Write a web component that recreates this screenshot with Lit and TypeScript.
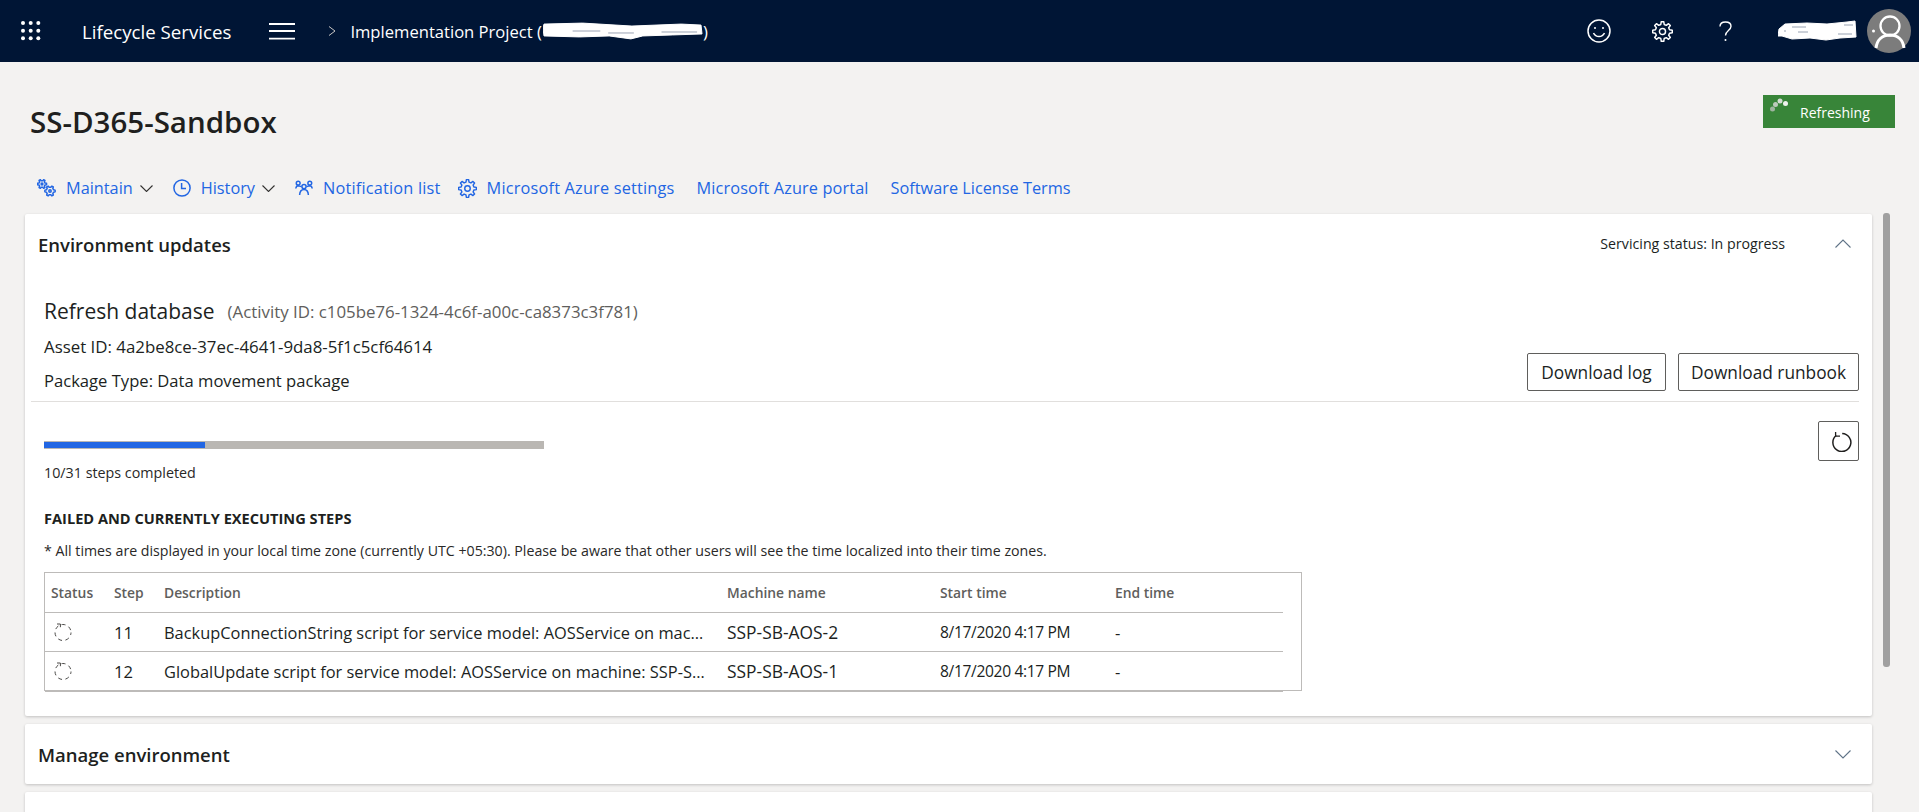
import { LitElement, html, css, svg } from 'lit';
import { customElement } from 'lit/decorators.js';

// gear outline, used in the top bar and in the command bar
const gearPath = (cx: number, cy: number, outer: number, inner: number, teeth = 8) => {
  const pts: string[] = [];
  const step = (Math.PI * 2) / teeth;
  for (let i = 0; i < teeth; i++) {
    const a = i * step;
    [[-0.3, inner], [-0.16, outer], [0.16, outer], [0.3, inner]].forEach(([k, r]) => {
      const t = a + k * step;
      pts.push(`${(cx + Math.cos(t) * r).toFixed(2)},${(cy + Math.sin(t) * r).toFixed(2)}`);
    });
  }
  return `M${pts.join('L')}Z`;
};

const chevron = (up = false) => html`
  <svg class="chev" width="16" height="9" viewBox="0 0 16 9" fill="none" stroke="currentColor" stroke-width="1.1">
    <path d=${up ? 'M.5 8.5 8 1l7.5 7.5' : 'M.5.5 8 8 15.5.5'} />
  </svg>`;

const navChevron = html`
  <svg width="13" height="7" viewBox="0 0 13 7" fill="none" stroke="#323130" stroke-width="1.1"><path d="M.5.5l6 6 6-6" /></svg>`;

const gearIcon = (size: number, sw: number) => html`
  <svg width=${size} height=${size} viewBox="0 0 20 20" fill="none" stroke="currentColor" stroke-width=${sw} stroke-linejoin="round">
    <path d=${gearPath(10, 10, 9.4, 6.9)} />
    <circle cx="10" cy="10" r="2.9" />
  </svg>`;

const maintainIcon = html`
  <svg width="19" height="18" viewBox="0 0 19 18" fill="none" stroke="currentColor" stroke-width="1.5" stroke-linejoin="round">
    <path d=${gearPath(5, 5, 4.6, 3.2, 6)} />
    <circle cx="5" cy="5" r=".9" />
    <path d=${gearPath(13, 12, 5.2, 3.8, 6)} />
    <circle cx="13" cy="12" r="1.2" />
  </svg>`;

const clockIcon = html`
  <svg width="18" height="18" viewBox="0 0 18 18" fill="none" stroke="currentColor" stroke-width="1.5">
    <circle cx="9" cy="9" r="8.1" />
    <path d="M8.6 4v5.6h4.4" />
  </svg>`;

const peopleIcon = html`
  <svg width="18" height="16" viewBox="0 0 18 16" fill="none" stroke="currentColor" stroke-width="1.5">
    <circle cx="3.2" cy="3.2" r="1.9" />
    <circle cx="14.8" cy="3.2" r="1.9" />
    <circle cx="9" cy="6.6" r="2.1" />
    <path d="M.8 8.5c.3-2 1-2.9 2.6-2.8l3 .9M17.2 8.5c-.3-2-1-2.9-2.6-2.8l-3 .9M4.6 15c.2-3.6 1.7-5.6 4.4-5.6s4.2 2 4.4 5.6" />
  </svg>`;

const spinner = html`
  <svg class="spin" width="20" height="20" viewBox="0 0 20 20" fill="none" stroke="#4a4947" stroke-width="1">
    <circle cx="10" cy="10.5" r="8" stroke-dasharray="4 3.5" stroke-dashoffset="1.5" />
    <path d="M4 2h3.4v3.2" />
  </svg>`;

const navItems = [
  { icon: maintainIcon, text: 'Maintain', menu: true },
  { icon: clockIcon, text: 'History', menu: true },
  { icon: peopleIcon, text: 'Notification list', menu: false },
  { icon: gearIcon(19, 1.5), text: 'Microsoft Azure settings', menu: false },
  { icon: null, text: 'Microsoft Azure portal', menu: false },
  { icon: null, text: 'Software License Terms', menu: false },
];

const steps = [
  { step: '11', description: 'BackupConnectionString script for service model: AOSService on machine: SSP-SB-AOS-2', machine: 'SSP-SB-AOS-2', start: '8/17/2020 4:17 PM', end: '-' },
  { step: '12', description: 'GlobalUpdate script for service model: AOSService on machine: SSP-SB-AOS-1', machine: 'SSP-SB-AOS-1', start: '8/17/2020 4:17 PM', end: '-' },
];

@customElement('app-root')
export class AppRoot extends LitElement {
  static styles = css`
    :host {
      display: block;
      height: 812px;
      overflow: hidden;
      background: #f3f2f1;
      color: #201f1e;
      font-family: 'Open Sans', 'Noto Sans', sans-serif;
    }
    svg { display: block; flex: none; }

    /* top bar */
    .topbar {
      height: 62px;
      display: flex;
      align-items: center;
      padding: 0 8px 0 21px;
      background: #001535;
      color: #fff;
    }
    .product { margin-left: 41px; font-size: 18.7px; }
    .burger { margin-left: 38px; }
    .crumb-sep { margin-left: 33px; }
    .crumb { margin-left: 14px; font-size: 16.6px; }
    .crumb.close { margin-left: 0; }
    .redacted { margin-left: 1px; }
    .actions { margin-left: auto; display: flex; align-items: center; }
    .actions .gear { margin-left: 41px; }
    .actions .help { margin-left: 46px; }
    .actions .user { margin-left: 46px; }
    .actions .avatar { margin-left: 10px; }

    /* title + status */
    .title-row {
      display: flex;
      justify-content: space-between;
      align-items: flex-start;
      padding: 33px 24px 0 30px;
    }
    h1 {
      margin: 9px 0 1px;
      font-size: 29.5px;
      line-height: 36px;
      font-weight: 600;
    }
    .status-pill {
      width: 132px;
      height: 33px;
      box-sizing: border-box;
      display: flex;
      padding: 3px 0 0 7px;
      background: #388539;
      color: #fff;
      font-size: 14px;
      line-height: 30px;
    }
    .status-pill svg { margin-right: 12px; }

    /* command bar */
    .commands {
      display: flex;
      align-items: center;
      height: 24px;
      margin-top: 35px;
      padding-left: 37px;
      color: #2266e3;
      font-size: 16.3px;
    }
    .cmd { display: flex; align-items: center; margin-right: 20px; white-space: nowrap; }
    .cmd svg + span { margin-left: 10px; }
    .cmd span + svg { margin-left: 7px; }
    .cmd:nth-child(3) { margin-right: 17px; }
    .cmd:nth-child(3) span { letter-spacing: 0.2px; }
    .cmd:nth-child(4) { margin-right: 22px; }
    .cmd:nth-child(4) span { letter-spacing: 0.2px; }
    .cmd:nth-child(5) { margin-right: 22px; }
    .cmd:nth-child(5) span { letter-spacing: 0.12px; }

    /* cards */
    .content { display: flex; margin-top: 14px; padding: 0 29px 0 25px; }
    .cards { flex: 1; display: flex; flex-direction: column; gap: 8px; }
    .thumb {
      flex: none;
      width: 7px;
      height: 454px;
      margin: -1px 0 0 11px;
      border-radius: 3px;
      background: #a0a0a0;
    }
    .card {
      background: #fff;
      border-radius: 2px;
      box-shadow: 0 1px 3px rgba(0, 0, 0, 0.2);
    }
    .card.stub { height: 60px; }
    .card-head {
      height: 64px;
      display: flex;
      align-items: center;
      justify-content: space-between;
      padding: 0 21px 3px 13px;
      box-sizing: border-box;
    }
    .card-head.small { height: 60px; padding-bottom: 0; }
    .card-head h2 { margin: 0; font-size: 18.5px; font-weight: 600; }
    .chev { color: #5f7387; }
    .card-tools { display: flex; align-items: center; margin-top: -2px; }
    .servicing { font-size: 14.2px; margin-right: 50px; }

    .card-body { margin: 0 13px 0 6px; padding-bottom: 25px; }
    .summary {
      display: flex;
      justify-content: space-between;
      align-items: flex-end;
      padding: 18px 0 8px 13px;
      border-bottom: 1px solid #e1dfdd;
    }
    .activity { display: flex; align-items: center; height: 30px; }
    .activity b { font-size: 21px; font-weight: 400; }
    .activity span { margin-left: 13px; font-size: 16.85px; color: #605e5c; }
    .meta { margin-top: 9px; font-size: 16.85px; line-height: 24px; }
    .meta + .meta { margin-top: 10px; font-size: 16.6px; }
    .buttons { display: flex; gap: 12px; margin-bottom: 2px; }
    .btn {
      width: 139px;
      height: 38px;
      box-sizing: border-box;
      padding: 0;
      border: 1px solid #5f5e5c;
      border-radius: 2px;
      background: #fff;
      color: #201f1e;
      font: inherit;
      font-size: 17.3px;
    }
    .btn.wide { width: 181px; }

    .progress-area { display: flex; justify-content: space-between; align-items: flex-start; padding-left: 13px; }
    .progress-main { padding-top: 39px; }
    .bar { width: 500px; height: 8px; background: #bab7b3; }
    .bar-fill { height: 6px; position: relative; top: 1px; background: #2266e3; }
    .steps-done { margin-top: 14px; font-size: 14.3px; line-height: 20px; color: #292827; }
    h3 { margin: 25px 0 0; font-size: 14.6px; line-height: 20px; font-weight: 700; }
    .note { margin-top: 13px; font-size: 14.2px; line-height: 20px; color: #292827; white-space: nowrap; }
    .reload {
      width: 41px;
      height: 40px;
      margin-top: 19px;
      box-sizing: border-box;
      display: flex;
      align-items: center;
      justify-content: flex-end;
      padding: 0 6px 0 0;
      border: 1px solid #5f5e5c;
      border-radius: 2px;
      background: #fff;
    }

    .table-box { width: 1258px; height: 119px; margin-top: 11px; box-sizing: border-box; border: 1px solid #bdbbb9; }
    table { width: 1238px; table-layout: fixed; border-collapse: collapse; }
    th, td { padding: 0 0 0 6px; text-align: left; white-space: nowrap; overflow: hidden; text-overflow: ellipsis; }
    th { height: 39px; font-size: 13.85px; font-weight: 600; color: #605e5c; border-bottom: 1px solid #bdbbb9; }
    td { height: 38px; font-size: 16.6px; border-bottom: 1px solid #bdbbb9; }
    tr:last-child td { border-bottom-width: 2px; }
    td.description { padding-right: 8px; font-size: 16.4px; }
    td.machine { font-size: 17.4px; }
    td.when { font-size: 15.6px; letter-spacing: -0.35px; }
    .spin { margin-left: 2px; }
  `;

  render() {
    return html`
      <header class="topbar">
        <svg width="20" height="20" viewBox="0 0 20 20" fill="#fff">
          ${[2, 9.7, 17.3].map((y) => [2, 9.7, 17.3].map((x) => svg`<circle cx=${x} cy=${y} r="2" />`))}
        </svg>
        <span class="product">Lifecycle Services</span>
        <svg class="burger" width="26" height="17" viewBox="0 0 26 17" stroke="#fff" stroke-width="1.8">
          <path d="M0 1h26M0 8h26M0 15.6h26" />
        </svg>
        <svg class="crumb-sep" width="8" height="10" viewBox="0 0 8 10" fill="none" stroke="#c8c6c4"><path d="M1 .5 7 5 1 9.5" /></svg>
        <span class="crumb">Implementation Project (</span>
        <svg class="redacted" width="160" height="18" viewBox="0 0 162 18">
          <path d="M1 2 40 1l50 3 50-2 20 1 1 9-30 1-30 1-12 3-22-3-30 1-36-1-1-8z" fill="#fff" stroke="#fff" stroke-linejoin="round" />
          <path d="M30 9h28M66 11h26M120 10h36" fill="none" stroke="#7f8aa0" stroke-width=".8" />
        </svg>
        <span class="crumb close">)</span>

        <div class="actions">
          <svg width="24" height="24" viewBox="0 0 24 24" fill="none" stroke="#fff" stroke-width="1.5">
            <circle cx="12" cy="12" r="11" />
            <path d="M6.5 14c1.2 2.4 3 3.5 5.5 3.5s4.3-1.1 5.5-3.5" />
            <circle cx="8" cy="9" r="1" fill="#fff" stroke="none" />
            <circle cx="16" cy="9" r="1" fill="#fff" stroke="none" />
          </svg>
          <span class="gear">${gearIcon(21, 1.4)}</span>
          <svg class="help" width="13" height="21" viewBox="0 0 13 21" fill="none" stroke="#fff" stroke-width="1.4">
            <path d="M1 5.5C1 2.6 3.2 1 6.5 1S12 2.8 12 5.3c0 4.2-5.5 4.2-5.5 9.2" />
            <circle cx="6.5" cy="19" r="1" fill="#fff" stroke="none" />
          </svg>
          <svg class="user" width="79" height="22" viewBox="0 0 79 22">
            <path d="M1 9 7 4l22-1 20 1 20-2 8-1 1 16-16 1-14 2-16-2-18 1-10-3-4 0z" fill="#fff" stroke="#fff" stroke-linejoin="round" />
            <path d="M14 7h14M6 11h2M20 12h10M60 14h14M66 5h9" fill="none" stroke="#7f8aa0" stroke-width=".8" />
          </svg>
          <svg class="avatar" width="44" height="44" viewBox="0 0 44 44" fill="none">
            <circle cx="22" cy="22" r="22" fill="#7c7c7c" />
            <circle cx="23" cy="17" r="9.5" stroke="#fff" stroke-width="2.3" />
            <path d="M9 39c1-8 6-13 14-13s13 5 14 13" stroke="#fff" stroke-width="3" />
            <circle cx="6.5" cy="22" r="1.5" fill="#fff" />
          </svg>
        </div>
      </header>

      <div class="title-row">
        <h1>SS-D365-Sandbox</h1>
        <div class="status-pill">
          <svg width="18" height="14" viewBox="0 0 18 14">
            <circle cx="2.5" cy="11" r="2.5" fill="#9fb4a0" />
            <circle cx="5.5" cy="6.5" r="2.5" fill="#bccabc" />
            <circle cx="10" cy="3" r="2.5" fill="#d4dcd4" />
            <circle cx="15.5" cy="5.5" r="2.5" fill="#eef2ee" />
          </svg>
          <span>Refreshing</span>
        </div>
      </div>

      <nav class="commands">
        ${navItems.map((item) => html`
          <div class="cmd">
            ${item.icon}
            <span>${item.text}</span>
            ${item.menu ? navChevron : ''}
          </div>`)}
      </nav>

      <div class="content">
        <div class="cards">
          <section class="card">
            <div class="card-head">
              <h2>Environment updates</h2>
              <div class="card-tools">
                <span class="servicing">Servicing status: In progress</span>
                ${chevron(true)}
              </div>
            </div>
            <div class="card-body">
              <div class="summary">
                <div>
                  <div class="activity">
                    <b>Refresh database</b>
                    <span>(Activity ID: c105be76-1324-4c6f-a00c-ca8373c3f781)</span>
                  </div>
                  <div class="meta">Asset ID: 4a2be8ce-37ec-4641-9da8-5f1c5cf64614</div>
                  <div class="meta">Package Type: Data movement package</div>
                </div>
                <div class="buttons">
                  <button class="btn">Download log</button>
                  <button class="btn wide">Download runbook</button>
                </div>
              </div>

              <div class="progress-area">
                <div class="progress-main">
                  <div class="bar"><div class="bar-fill" style="width:${(10 / 31) * 100}%"></div></div>
                  <div class="steps-done">10/31 steps completed</div>
                  <h3>FAILED AND CURRENTLY EXECUTING STEPS</h3>
                  <div class="note">* All times are displayed in your local time zone (currently UTC +05:30). Please be aware that other users will see the time localized into their time zones.</div>
                  <div class="table-box">
                    <table>
                      <colgroup>
                        <col style="width:63px" /><col style="width:50px" /><col style="width:563px" />
                        <col style="width:213px" /><col style="width:175px" /><col style="width:174px" />
                      </colgroup>
                      <thead>
                        <tr><th>Status</th><th>Step</th><th>Description</th><th>Machine name</th><th>Start time</th><th>End time</th></tr>
                      </thead>
                      <tbody>
                        ${steps.map((row) => html`
                          <tr>
                            <td>${spinner}</td>
                            <td>${row.step}</td>
                            <td class="description">${row.description}</td>
                            <td class="machine">${row.machine}</td>
                            <td class="when">${row.start}</td>
                            <td>${row.end}</td>
                          </tr>`)}
                      </tbody>
                    </table>
                  </div>
                </div>
                <button class="reload" aria-label="Refresh">
                  <svg width="20" height="21" viewBox="0 0 20 21" fill="none" stroke="#201f1e" stroke-width="1.5">
                    <path d="M4.2 4.5a9 9 0 1 0 6-2" />
                    <path d="M3.6 1v4.2h4.4" stroke-width="1.3" />
                  </svg>
                </button>
              </div>
            </div>
          </section>

          <section class="card">
            <div class="card-head small">
              <h2>Manage environment</h2>
              ${chevron()}
            </div>
          </section>

          <section class="card stub"></section>
        </div>
        <div class="thumb"></div>
      </div>
    `;
  }
}
